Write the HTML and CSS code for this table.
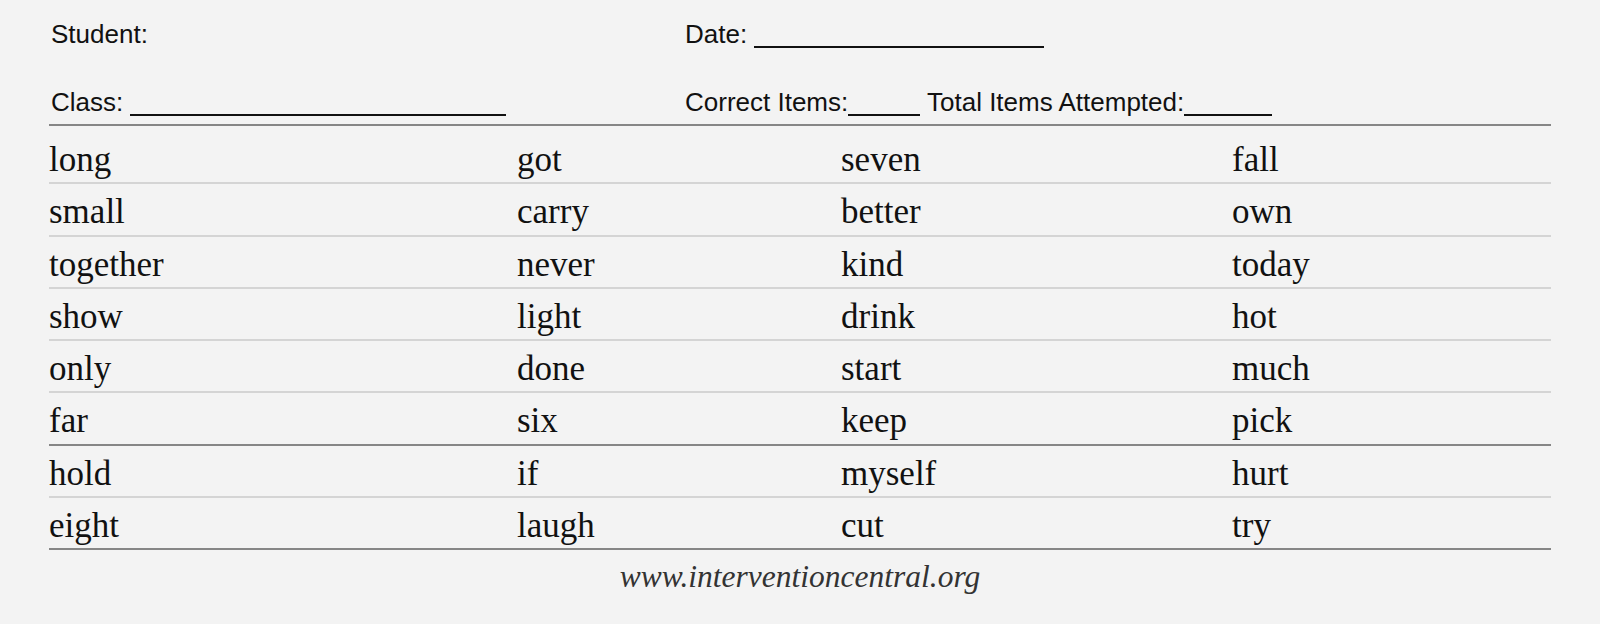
FILE: index.html
```html
<!DOCTYPE html>
<html lang="en">
<head>
<meta charset="utf-8">
<title>Word List Probe</title>
<link rel="stylesheet" href="styles.css">
</head>
<body>
<div class="sheet">
  <div class="info">
    <div class="field">Student:</div>
    <div class="field">Date: <span class="blank blank-date"></span></div>
    <div class="field">Class: <span class="blank blank-class"></span></div>
    <div class="field">Correct Items:<span class="blank blank-correct"></span> Total Items Attempted:<span class="blank blank-total"></span></div>
  </div>
  <div class="words">
    <div class="row"><span>long</span><span>got</span><span>seven</span><span>fall</span></div>
    <div class="row"><span>small</span><span>carry</span><span>better</span><span>own</span></div>
    <div class="row"><span>together</span><span>never</span><span>kind</span><span>today</span></div>
    <div class="row"><span>show</span><span>light</span><span>drink</span><span>hot</span></div>
    <div class="row"><span>only</span><span>done</span><span>start</span><span>much</span></div>
    <div class="row row-dark"><span>far</span><span>six</span><span>keep</span><span>pick</span></div>
    <div class="row"><span>hold</span><span>if</span><span>myself</span><span>hurt</span></div>
    <div class="row row-dark"><span>eight</span><span>laugh</span><span>cut</span><span>try</span></div>
  </div>
  <div class="footer">www.interventioncentral.org</div>
</div>
</body>
</html>
```
FILE: styles.css
```css
html, body {
  margin: 0;
  padding: 0;
}

body {
  background: #f3f3f3;
  color: #111;
}

.sheet {
  width: 1502px;
  margin-left: 49px;
}

.info {
  display: grid;
  grid-template-columns: 636px 1fr;
  row-gap: 38px;
  padding-top: 19px;
  font-family: "Liberation Sans", Arial, sans-serif;
  font-size: 26px;
  line-height: 30px;
  color: #111;
}

.field {
  white-space: nowrap;
}

.field:nth-child(odd) {
  padding-left: 2px;
}

.blank {
  display: inline-block;
  height: 0;
  border-bottom: 2px solid #111;
  vertical-align: -5px;
}

.blank-date { width: 290px; }
.blank-class { width: 376px; }
.blank-correct { width: 72px; }
.blank-total { width: 88px; }

.words {
  margin-top: 7px;
  border-top: 2px solid #868686;
}

.row {
  display: grid;
  grid-template-columns: 468px 324px 391px 1fr;
  height: 47.3px;
  padding-top: 3px;
  border-bottom: 2px solid #d4d4d4;
  font-family: "Liberation Serif", "Times New Roman", serif;
  font-size: 35px;
  line-height: 50px;
  color: #111;
}

.row:first-child {
  padding-top: 9px;
}

.row-dark {
  border-bottom-color: #868686;
}

.footer {
  margin-top: 8px;
  text-align: center;
  font-family: "Liberation Serif", "Times New Roman", serif;
  font-style: italic;
  font-size: 31.5px;
  line-height: 38px;
  color: #333;
}
```
